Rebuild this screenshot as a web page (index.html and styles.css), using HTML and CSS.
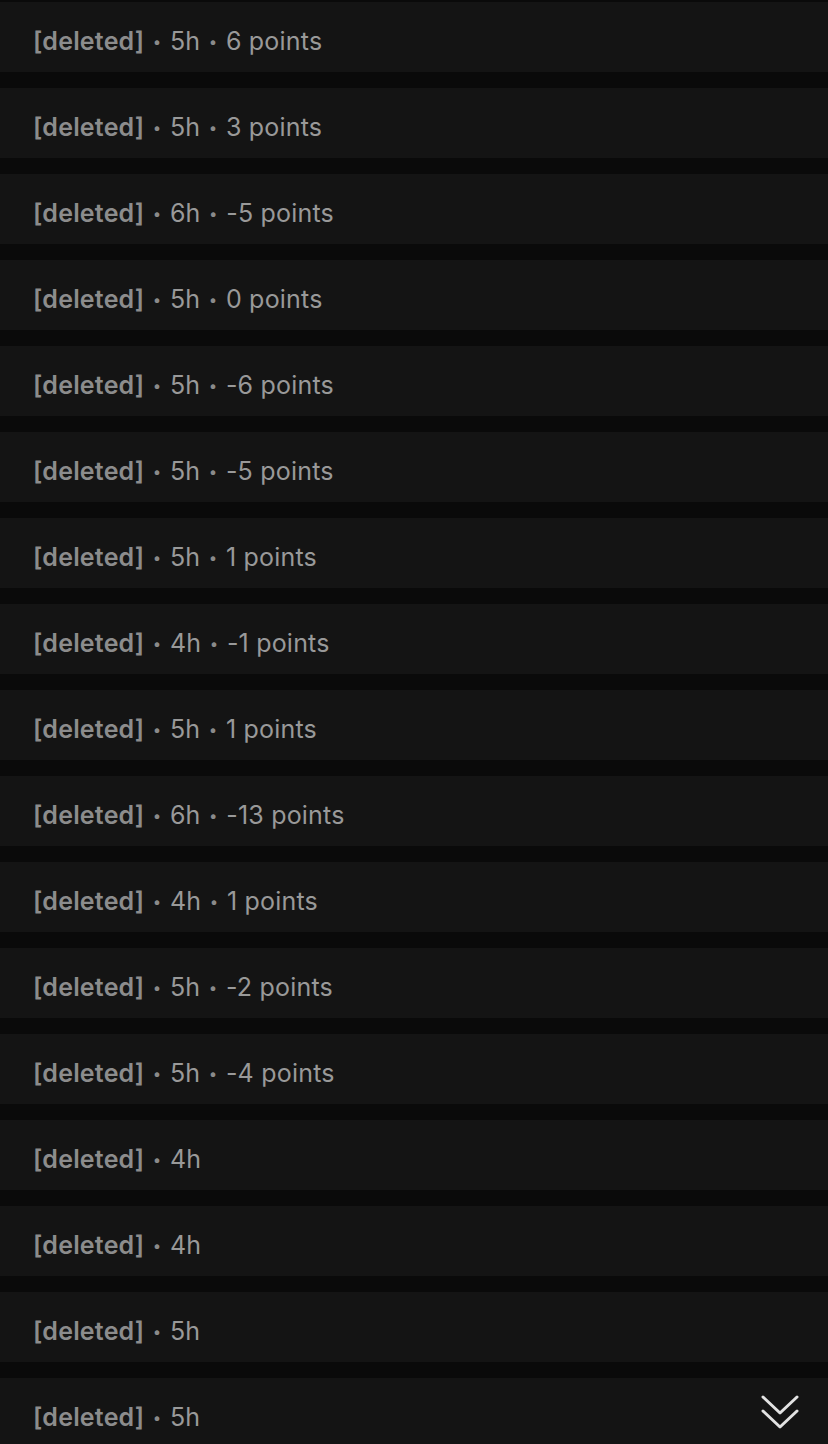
FILE: index.html
```html
<!DOCTYPE html>
<html lang="en">
<head>
    <meta charset="UTF-8">
    <meta name="viewport" content="width=device-width, initial-scale=1.0">
    <title>Comments</title>
    <link rel="stylesheet" href="styles.css">
</head>
<body>
  <ul class="comments">
    <li class="comment"><span class="author">[deleted]</span><span class="dot">•</span><span>5h</span><span class="dot">•</span><span>6 points</span></li>
    <li class="comment"><span class="author">[deleted]</span><span class="dot">•</span><span>5h</span><span class="dot">•</span><span>3 points</span></li>
    <li class="comment"><span class="author">[deleted]</span><span class="dot">•</span><span>6h</span><span class="dot">•</span><span>-5 points</span></li>
    <li class="comment"><span class="author">[deleted]</span><span class="dot">•</span><span>5h</span><span class="dot">•</span><span>0 points</span></li>
    <li class="comment"><span class="author">[deleted]</span><span class="dot">•</span><span>5h</span><span class="dot">•</span><span>-6 points</span></li>
    <li class="comment"><span class="author">[deleted]</span><span class="dot">•</span><span>5h</span><span class="dot">•</span><span>-5 points</span></li>
    <li class="comment"><span class="author">[deleted]</span><span class="dot">•</span><span>5h</span><span class="dot">•</span><span>1 points</span></li>
    <li class="comment"><span class="author">[deleted]</span><span class="dot">•</span><span>4h</span><span class="dot">•</span><span>-1 points</span></li>
    <li class="comment"><span class="author">[deleted]</span><span class="dot">•</span><span>5h</span><span class="dot">•</span><span>1 points</span></li>
    <li class="comment"><span class="author">[deleted]</span><span class="dot">•</span><span>6h</span><span class="dot">•</span><span>-13 points</span></li>
    <li class="comment"><span class="author">[deleted]</span><span class="dot">•</span><span>4h</span><span class="dot">•</span><span>1 points</span></li>
    <li class="comment"><span class="author">[deleted]</span><span class="dot">•</span><span>5h</span><span class="dot">•</span><span>-2 points</span></li>
    <li class="comment"><span class="author">[deleted]</span><span class="dot">•</span><span>5h</span><span class="dot">•</span><span>-4 points</span></li>
    <li class="comment"><span class="author">[deleted]</span><span class="dot">•</span><span>4h</span></li>
    <li class="comment"><span class="author">[deleted]</span><span class="dot">•</span><span>4h</span></li>
    <li class="comment"><span class="author">[deleted]</span><span class="dot">•</span><span>5h</span></li>
    <li class="comment"><span class="author">[deleted]</span><span class="dot">•</span><span>5h</span></li>
  </ul>

  <button type="button" class="jump" aria-label="Next comment">
    <svg width="40" height="40" viewBox="0 0 40 40">
      <path d="M3 5 L20 21 L37 5 M3 19 L20 35 L37 19" fill="none" stroke="#e2e2e2" stroke-width="3" stroke-linecap="round" stroke-linejoin="round"/>
    </svg>
  </button>
</body>
</html>
```

FILE: styles.css
```css
html,
body {
    margin: 0;
    padding: 0;
    background: #0a0a0a;
    height: 1444px;
    overflow: hidden;
}

body {
    font-family: Inter, "Liberation Sans", sans-serif;
    color: #999;
}

.comments {
    list-style: none;
    margin: 0;
    padding: 2px 0 0;
    display: flex;
    flex-direction: column;
    gap: 16px;
}

.comment {
    display: flex;
    align-items: center;
    box-sizing: border-box;
    height: 70px;
    padding: 8px 0 0 33px;
    background: #141414;
    font-size: 25px;
    letter-spacing: 0.2px;
}

.author {
    font-weight: 600;
    color: #8c8c8c;
}

.dot {
    font-size: 15px;
    margin: 0 8.5px;
    color: #8a8a8a;
}

.jump {
    position: absolute;
    left: 760px;
    top: 1392px;
    padding: 0;
    border: 0;
    background: none;
    width: 40px;
    height: 40px;
}
```
